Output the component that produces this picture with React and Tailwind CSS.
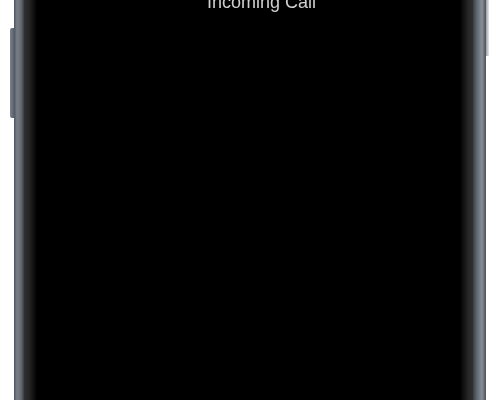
import React from 'react';

export default function App() {
  return (
    <div className="w-[500px] h-[400px] bg-white flex overflow-hidden">
      {/* left gap with side button */}
      <div className="w-[14px] flex flex-col">
        <div className="ml-[10px] mt-[28px] w-[4px] h-[90px] rounded-l-[2px] bg-[linear-gradient(to_right,#7c828a,#5a6068)]" />
      </div>

      {/* phone body */}
      <div className="flex-1 flex bg-[linear-gradient(to_right,#4c5462_0px,#7b7f87_3px,#666a72_7px,#3b3d42_10px,#3b3d42_calc(100%-13px),#5f6a72_calc(100%-9px),#8a8e96_calc(100%-4px),#4d5058_100%)] pl-[10px] pr-[13px]">
        <div className="flex-1 flex flex-col items-center bg-[linear-gradient(to_right,#303030_0px,#252525_5px,#000_13px,#000_calc(100%-13px),#252525_calc(100%-5px),#303030_100%)]">
          <div
            className="mt-[-7px] ml-[26px] text-[18px] leading-[18px] text-[#cfcfcf] blur-[0.6px]"
            style={{ fontFamily: '"Liberation Sans", Arial, sans-serif' }}
          >
            Incoming Call
          </div>
        </div>
      </div>

      {/* right gap */}
      <div className="w-[14px] flex flex-col">
        <div className="w-[3px] h-[56px] bg-[linear-gradient(to_right,#9aa0a6,#e6e8ea)]" />
      </div>
    </div>
  );
}
